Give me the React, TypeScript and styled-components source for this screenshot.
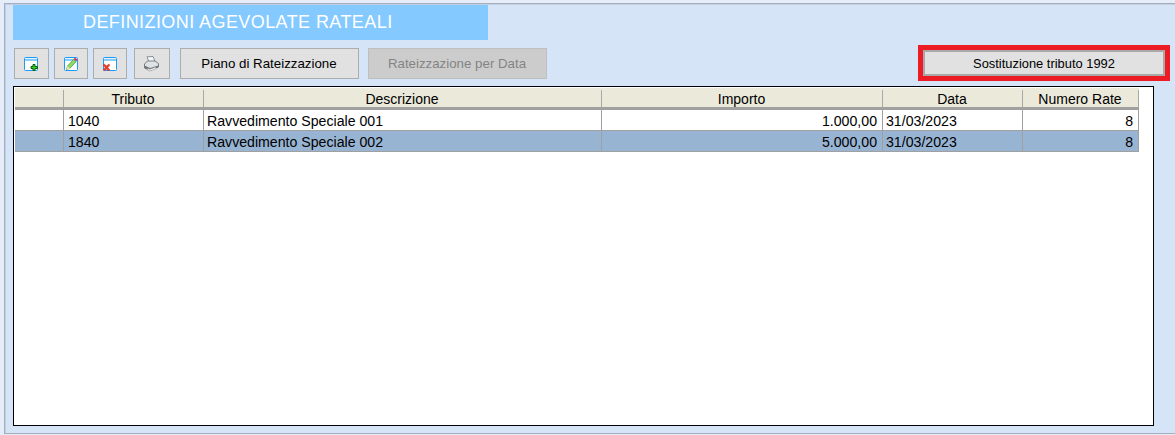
import React from "react";
import styled, { createGlobalStyle } from "styled-components";

const Global = createGlobalStyle`
  html, body { margin: 0; padding: 0; background: #e6edf9; }
  body { width: 1175px; height: 435px; overflow: hidden; font-family: "Liberation Sans", Arial, sans-serif; }
`;

const Panel = styled.div`
  box-sizing: border-box;
  width: 1171px;
  height: 431px;
  margin: 3px 0 0 4px;
  padding: 1px 5px 7px 8px;
  background: #d6e4f8;
  border-left: 1px solid #a3aebf;
  border-top: 1px solid #a3aebf;
  border-bottom: 1px solid #a3aebf;
  box-shadow: inset 1px 1px 0 #c3cfe2;
  display: flex;
  flex-direction: column;
`;

const Title = styled.div`
  box-sizing: border-box;
  width: 475px;
  height: 35px;
  padding-left: 70px;
  background: #84c9ff;
  color: #fff;
  font-size: 18px;
  letter-spacing: 0.42px;
  line-height: 35px;
  flex: none;
`;

const Toolbar = styled.div`
  display: flex;
  align-items: flex-start;
  height: 36px;
  margin-top: 5px;
  flex: none;
`;

const Tools = styled.div`
  display: flex;
  align-items: center;
  margin-left: 1px;
  padding-top: 3px;
`;

const ToolButton = styled.div<{ $w: number; $mr: number }>`
  box-sizing: border-box;
  width: ${(p) => p.$w}px;
  height: 31px;
  margin-right: ${(p) => p.$mr}px;
  padding-right: 1px;
  background: #e1e1e1;
  border: 1px solid #adadad;
  display: flex;
  align-items: center;
  justify-content: center;
`;

const TextButton = styled.div<{ $w: number; $disabled?: boolean }>`
  box-sizing: border-box;
  width: ${(p) => p.$w}px;
  height: 31px;
  margin-right: 9px;
  padding-right: 1px;
  background: ${(p) => (p.$disabled ? "#cccccc" : "#e1e1e1")};
  border: 1px solid ${(p) => (p.$disabled ? "#bfbfbf" : "#adadad")};
  color: ${(p) => (p.$disabled ? "#848484" : "#000")};
  font-size: 13.3px;
  display: flex;
  align-items: center;
  justify-content: center;
`;

const Highlight = styled.div`
  box-sizing: border-box;
  width: 252px;
  height: 36px;
  margin-left: auto;
  border: 5px solid #ed1c24;
  display: flex;
`;

const WideButton = styled.div`
  box-sizing: border-box;
  flex: 1;
  background: #e1e1e1;
  border: 2px solid #a9a9a9;
  font-size: 12.9px;
  color: #000;
  display: flex;
  align-items: center;
  justify-content: center;
`;

const Grid = styled.div`
  box-sizing: border-box;
  width: 1141px;
  height: 340px;
  margin-top: 5px;
  padding: 1px;
  background: #fff;
  border: 1px solid #000;
  flex: none;
`;

const Table = styled.div`
  display: grid;
  grid-template-columns: 49px 140px 398px 281px 140px 116px;
  width: 1124px;
`;

const HeadCell = styled.div`
  box-sizing: border-box;
  position: relative;
  height: 22px;
  padding: 3px 2px 0 0;
  background: #ebe9da;
  border-bottom: 3px solid #a0a0a0;
  font-size: 14px;
  line-height: 17px;
  text-align: center;
  color: #000;
  &:not(:last-child)::after {
    content: "";
    position: absolute;
    right: 0;
    top: 2px;
    bottom: 0;
    width: 1px;
    background: #a8a8a8;
  }
`;

const Cell = styled.div<{ $sel?: boolean; $right?: boolean }>`
  box-sizing: border-box;
  height: 21px;
  padding: 1px ${(p) => (p.$right ? "5px" : "3px")} 0 3px;
  background: ${(p) => (p.$sel ? "#98b4d3" : "#fff")};
  border-right: 1px solid #a0a0a0;
  border-bottom: 1px solid #a0a0a0;
  font-size: 14.15px;
  line-height: 21px;
  color: #000;
  text-align: ${(p) => (p.$right ? "right" : "left")};
  white-space: nowrap;
`;

const CodeCell = styled(Cell)`
  padding-left: 4px;
`;

const Frame = () => (
  <>
    <rect x=".5" y=".5" width="13" height="13" rx="1" fill="#fff" stroke="#1a9bf8" />
    <rect x="1" y="1" width="12" height="1.500" fill="#e6f3fe" />
    <rect x="1" y="2.500" width="12" height="1" fill="#1a9bf8" />
  </>
);

const AddIcon = () => (
  <svg width="14" height="14" viewBox="0 0 14 14">
    <Frame />
    <path d="M9 7.500h2v2h2.500v2H11v2H9v-2H7v-2h2z" fill="#2fd02f" stroke="#0b5c0b" strokeWidth="1" />
  </svg>
);

const EditIcon = () => (
  <svg width="14" height="14" viewBox="0 0 14 14">
    <Frame />
    <path d="M2.500 12.500l1-3.500 6-6.500 2.500 2.200-6 6.500z" fill="#8fdc6a" stroke="#4f9a3c" strokeWidth=".8" />
    <path d="M9.800 2l1.200-1.500 2.300 2-1 2z" fill="#d9363e" />
    <path d="M2.500 12.500l1-3.500 2.500 3z" fill="#f2dfb8" />
  </svg>
);

const DeleteIcon = () => (
  <svg width="14" height="14" viewBox="0 0 14 14">
    <Frame />
    <path d="M0 8l1.300-1 2.200 1.800L5.700 7 7 8 5 10.500 7 13l-1.300 1-2.200-1.800L1.300 14 0 13l2-2.500z" fill="#e8402c" stroke="#b3261a" strokeWidth=".3" />
  </svg>
);

const PrintIcon = () => (
  <svg width="15" height="16" viewBox="0 0 15 16">
    <path d="M3 .8l6-.3 2 5-6 .5z" fill="#f4f7fa" stroke="#6f7a84" strokeWidth=".8" />
    <path d="M.5 8l3-3h7.500l3.500 2.500v3.500L6 14.500.5 12z" fill="#dfe2e4" stroke="#5f666c" strokeWidth=".8" />
    <path d="M.5 9.500L6 12l8.500-2.500v1.500L6 14.500.5 12z" fill="#6f757a" />
    <path d="M3.500 12.300l2.300 1 6-2.200v1.800l-6 2.100-2.300-1z" fill="#fafafa" stroke="#7f8a93" strokeWidth=".5" />
  </svg>
);

const columns = ["", "Tributo", "Descrizione", "Importo", "Data", "Numero Rate"];
const rows = [
  { code: "1040", desc: "Ravvedimento Speciale 001", amount: "1.000,00", date: "31/03/2023", n: "8", sel: false },
  { code: "1840", desc: "Ravvedimento Speciale 002", amount: "5.000,00", date: "31/03/2023", n: "8", sel: true },
];

export default function App() {
  return (
    <>
      <Global />
      <Panel>
        <Title>DEFINIZIONI AGEVOLATE RATEALI</Title>
        <Toolbar>
          <Tools>
            <ToolButton $w={35} $mr={5}><AddIcon /></ToolButton>
            <ToolButton $w={34} $mr={5}><EditIcon /></ToolButton>
            <ToolButton $w={34} $mr={7}><DeleteIcon /></ToolButton>
            <ToolButton $w={36} $mr={10}><PrintIcon /></ToolButton>
            <TextButton $w={179}>Piano di Rateizzazione</TextButton>
            <TextButton $w={179} $disabled>Rateizzazione per Data</TextButton>
          </Tools>
          <Highlight>
            <WideButton>Sostituzione tributo 1992</WideButton>
          </Highlight>
        </Toolbar>
        <Grid>
          <Table>
            {columns.map((c, i) => (
              <HeadCell key={i}>{c}</HeadCell>
            ))}
            {rows.map((r) => (
              <React.Fragment key={r.code}>
                <Cell $sel={r.sel} />
                <CodeCell $sel={r.sel}>{r.code}</CodeCell>
                <Cell $sel={r.sel}>{r.desc}</Cell>
                <Cell $sel={r.sel} $right>{r.amount}</Cell>
                <Cell $sel={r.sel}>{r.date}</Cell>
                <Cell $sel={r.sel} $right>{r.n}</Cell>
              </React.Fragment>
            ))}
          </Table>
        </Grid>
      </Panel>
    </>
  );
}
